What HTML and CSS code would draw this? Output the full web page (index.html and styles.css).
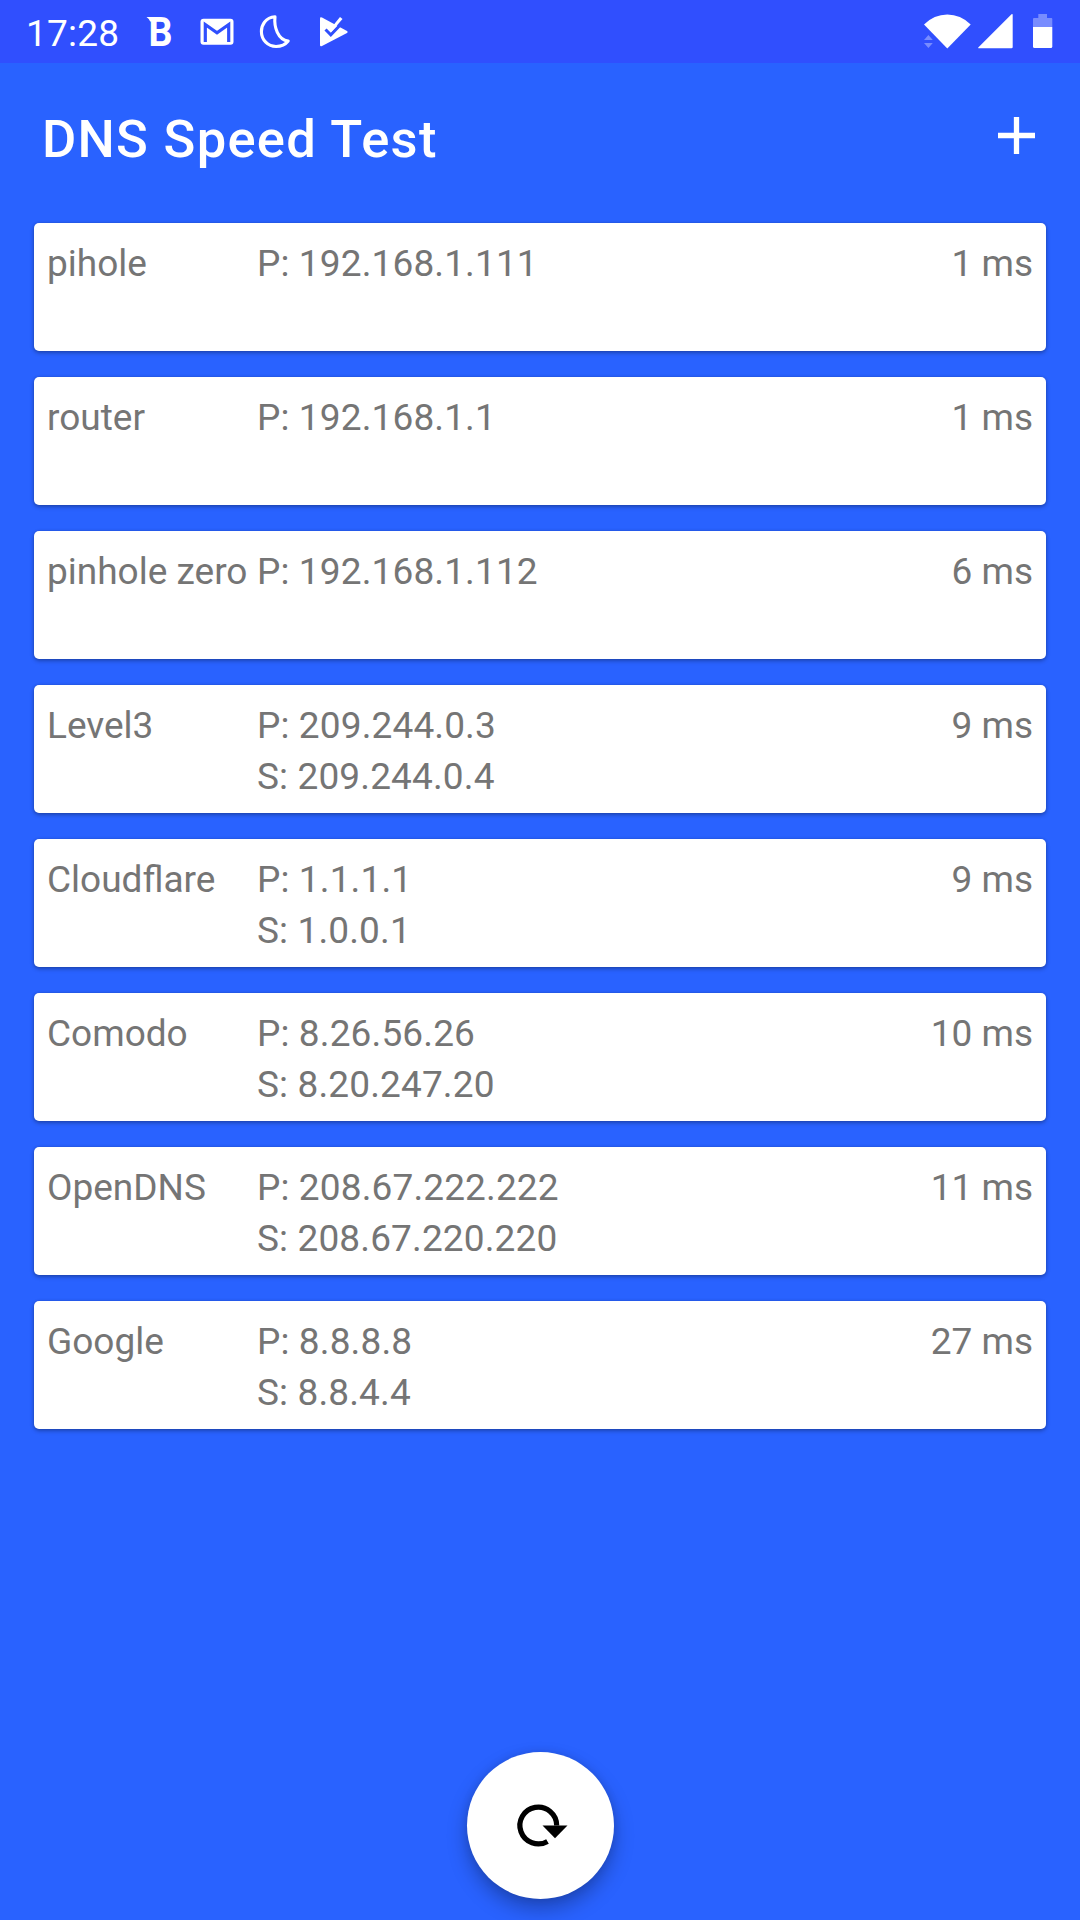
FILE: index.html
```
<!DOCTYPE html>
<html lang="en">
<head>
    <meta charset="UTF-8">
    <title>DNS Speed Test</title>
    <link rel="stylesheet" href="styles.css">
</head>
<body>

<div class="status-bar">
    <span class="clock">17:28</span>
    <div class="notifications">
        <svg viewBox="0 0 42 63"><path d="M8.500 17h8v4.500h-4.300q-1-3-3.700-4.500z"/><text class="b-logo" x="10.500" y="46" textLength="24" lengthAdjust="spacingAndGlyphs">B</text></svg>
        <svg viewBox="0 0 42 63">
            <rect x="4.500" y="18.800" width="33" height="26" rx="3"/>
            <path class="gmail-m" d="M9.300 42V24.500L21 32.800l11.700-8.300V42"/>
        </svg>
        <svg viewBox="0 0 42 63"><path d="M21 16.800C11.500 17.500 7.400 25 7.400 31.500 7.400 40 14 46.500 22 46.500c6 0 10-2.700 12.200-5.500C24 40 19.800 27 21 16.800z" fill="none" stroke="#fff" stroke-width="3.100" stroke-linejoin="round"/></svg>
        <svg viewBox="0 0 42 63">
            <path d="M8 18.500q0-2 2-1l25 13.500q1.500 1 0 2L10 46q-2 .800-2-1z"/>
            <path class="check" d="M13.500 29.500l5.300 5.300 13-13.500"/>
            <path d="M17.500 30l10.500-13 2.500 2-11.500 13.200z"/>
        </svg>
    </div>
    <div class="system">
        <svg class="wifi" viewBox="0 0 48 63">
            <path d="M1 24.500Q11 14.500 24.300 14.500T47.700 24.500L24.300 48.500z"/>
            <path class="dim" d="M1 40l4.400-5 4.400 5zM1 43h8.800l-4.400 5z"/>
        </svg>
        <svg class="signal" viewBox="0 0 36 63"><path d="M1 48.300q-1.300 0-.5-1L33.500 14.300q1.200-.8 1.200.7v32q0 1.300-1.300 1.300z"/></svg>
        <svg class="battery" viewBox="0 0 20 63">
            <path class="dim" d="M0 27v-8q0-1 1-1h4.300v-4h8.700v4h4.300q1 0 1 1v8z"/>
            <path d="M0 27h19.300v19.500q0 1.500-1.500 1.500H1.500Q0 48 0 46.500z"/>
        </svg>
    </div>
</div>

<header class="toolbar">
    <h1>DNS Speed Test</h1>
    <svg class="add" viewBox="0 0 37 37"><path d="M18.500 0v37M0 18.500h37"/></svg>
</header>

<main class="servers">
    <div class="card">
        <span class="name">pihole</span>
        <div class="address"><span>P: 192.168.1.111</span></div>
        <span class="time">1 ms</span>
    </div>
    <div class="card">
        <span class="name">router</span>
        <div class="address"><span>P: 192.168.1.1</span></div>
        <span class="time">1 ms</span>
    </div>
    <div class="card">
        <span class="name">pinhole zero</span>
        <div class="address"><span>P: 192.168.1.112</span></div>
        <span class="time">6 ms</span>
    </div>
    <div class="card">
        <span class="name">Level3</span>
        <div class="address"><span>P: 209.244.0.3</span><span>S: 209.244.0.4</span></div>
        <span class="time">9 ms</span>
    </div>
    <div class="card">
        <span class="name">Cloudflare</span>
        <div class="address"><span>P: 1.1.1.1</span><span>S: 1.0.0.1</span></div>
        <span class="time">9 ms</span>
    </div>
    <div class="card">
        <span class="name">Comodo</span>
        <div class="address"><span>P: 8.26.56.26</span><span>S: 8.20.247.20</span></div>
        <span class="time">10 ms</span>
    </div>
    <div class="card">
        <span class="name">OpenDNS</span>
        <div class="address"><span>P: 208.67.222.222</span><span>S: 208.67.220.220</span></div>
        <span class="time">11 ms</span>
    </div>
    <div class="card">
        <span class="name">Google</span>
        <div class="address"><span>P: 8.8.8.8</span><span>S: 8.8.4.4</span></div>
        <span class="time">27 ms</span>
    </div>
</main>

<button class="fab" aria-label="Restart">
    <svg viewBox="0 0 63 63">
        <path d="M47.700 31.500A18.400 18.400 0 1 0 38.500 47.400" fill="none" stroke="#000" stroke-width="5.200"/>
        <path d="M33.500 31.500h25L46 44.300z"/>
    </svg>
</button>

</body>
</html>
```
FILE: styles.css
```
:root {
    --primary: #2962ff;
    --primary-dark: #304ffe;
    --text: #757575;
}

* { box-sizing: border-box; }

body {
    margin: 0;
    height: 1920px;
    display: flex;
    flex-direction: column;
    background: var(--primary);
    color: #fff;
    font-family: Roboto, sans-serif;
    overflow: hidden;
}

/* Status bar */
.status-bar {
    height: 63px;
    display: flex;
    align-items: center;
    padding: 0 27px 0 26px;
    background: var(--primary-dark);
}
.status-bar svg { display: block; height: 63px; fill: #fff; }
.status-bar .dim { fill-opacity: 0.35; }

.clock { width: 112px; font-size: 37px; line-height: 63px; padding-top: 3px; letter-spacing: 0.2px; }

.notifications { display: flex; gap: 16px; }
.notifications svg { width: 42px; }
.b-logo { font-size: 40px; font-weight: 700; }
.gmail-m { fill: none; stroke: var(--primary-dark); stroke-width: 3.2; }
.check { fill: none; stroke: var(--primary-dark); stroke-width: 3; }

.system { display: flex; margin-left: auto; }
.wifi { width: 48px; margin-right: 7px; }
.signal { width: 36px; margin-right: 19px; }
.battery { width: 20px; }

/* Toolbar */
.toolbar {
    height: 147px;
    display: flex;
    align-items: center;
    justify-content: space-between;
    padding: 0 45px 2px 42px;
}
.toolbar h1 {
    margin: 0;
    padding-top: 6px;
    font-size: 52.5px;
    font-weight: 500;
    letter-spacing: 1.3px;
}
.add { width: 37px; height: 37px; fill: none; stroke: #fff; stroke-width: 5.3; }

/* Server list */
.servers {
    display: flex;
    flex-direction: column;
    gap: 26px;
    padding: 13px 34px 0;
}
.card {
    height: 128px;
    display: grid;
    grid-template-columns: 210px 1fr auto;
    padding: 15px 13px;
    background: #fff;
    border-radius: 5px;
    box-shadow: 0 2px 4px rgba(0, 0, 0, 0.28), 0 0 3px rgba(0, 0, 0, 0.15);
    color: var(--text);
    font-size: 37px;
    line-height: 51px;
    white-space: nowrap;
}
.address { display: flex; flex-direction: column; letter-spacing: 0.13px; }

/* Refresh button */
.fab {
    width: 147px;
    height: 147px;
    margin: auto auto 21px;
    padding: 0;
    display: flex;
    align-items: center;
    justify-content: center;
    border: 0;
    border-radius: 50%;
    background: #fff;
    box-shadow: 0 10px 20px rgba(0, 0, 0, 0.28), 0 0 8px rgba(0, 0, 0, 0.1);
}
.fab svg { width: 63px; height: 63px; }
```
